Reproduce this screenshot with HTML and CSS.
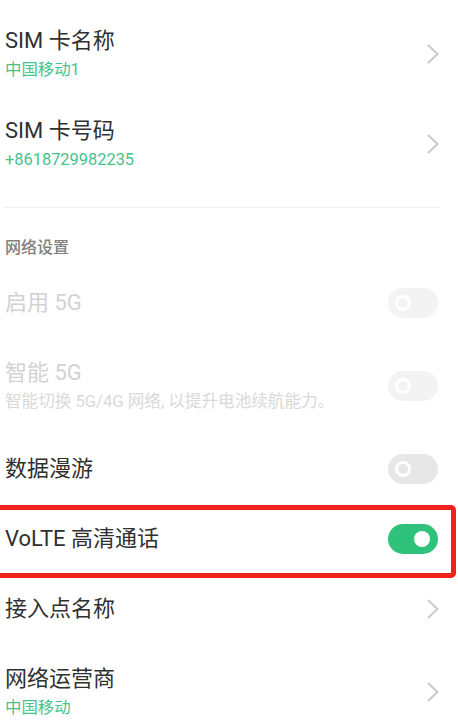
FILE: index.html
```html
<!DOCTYPE html>
<html lang="zh-CN">
<head>
<meta charset="utf-8">
<title>SIM 卡设置</title>
<link rel="stylesheet" href="styles.css">
</head>
<body>
<div class="page">
  <div class="row row-top">
    <div class="text">
      <div class="title">SIM 卡名称</div>
      <div class="sub">中国移动1</div>
    </div>
    <svg class="chev" viewBox="0 0 12 20" width="12" height="20"><polyline points="1.5,1.5 10.5,10 1.5,18.5"/></svg>
  </div>
  <div class="row row-top">
    <div class="text">
      <div class="title">SIM 卡号码</div>
      <div class="sub">+8618729982235</div>
    </div>
    <svg class="chev" viewBox="0 0 12 20" width="12" height="20"><polyline points="1.5,1.5 10.5,10 1.5,18.5"/></svg>
  </div>
  <div class="divider"></div>
  <div class="header">网络设置</div>
  <div class="row single disabled">
    <div class="text"><div class="title">启用 5G</div></div>
    <div class="toggle off faint"><span class="knob"></span></div>
  </div>
  <div class="row double disabled">
    <div class="text">
      <div class="title">智能 5G</div>
      <div class="desc">智能切换 5G/4G 网络, 以提升电池续航能力。</div>
    </div>
    <div class="toggle off faint"><span class="knob"></span></div>
  </div>
  <div class="row single">
    <div class="text"><div class="title">数据漫游</div></div>
    <div class="toggle off"><span class="knob"></span></div>
  </div>
  <div class="row single highlighted">
    <div class="text"><div class="title">VoLTE 高清通话</div></div>
    <div class="toggle on"><span class="knob"></span></div>
    <div class="mark"></div>
  </div>
  <div class="row single">
    <div class="text"><div class="title">接入点名称</div></div>
    <svg class="chev" viewBox="0 0 12 20" width="12" height="20"><polyline points="1.5,1.5 10.5,10 1.5,18.5"/></svg>
  </div>
  <div class="row double">
    <div class="text">
      <div class="title">网络运营商</div>
      <div class="sub">中国移动</div>
    </div>
    <svg class="chev" viewBox="0 0 12 20" width="12" height="20"><polyline points="1.5,1.5 10.5,10 1.5,18.5"/></svg>
  </div>
</div>
</body>
</html>
```
FILE: styles.css
```css
html, body {
  margin: 0;
  padding: 0;
  background: #ffffff;
  overflow: hidden;
  height: 726px;
}
body {
  font-family: "Roboto", "Noto Sans CJK SC", sans-serif;
  color: #303030;
}
.page {
  padding-top: 9px;
  padding-left: 5px;
}
.row {
  position: relative;
  display: flex;
  align-items: center;
  justify-content: space-between;
  box-sizing: border-box;
  padding-right: 20px;
}
.row-top { height: 90px; }
.single { height: 70px; }
.double { height: 96px; }
.text {
  display: flex;
  flex-direction: column;
}
.title {
  font-size: 22px;
  line-height: 30px;
  color: #303030;
}
.sub {
  font-size: 16.4px;
  line-height: 24px;
  margin-top: 2px;
  color: #43c48c;
}
.desc {
  font-size: 16.6px;
  line-height: 24px;
  margin-top: 2px;
  color: #d9d9d9;
}
.disabled .title { color: #d2d2d2; }
.chev {
  fill: none;
  stroke: #cacaca;
  stroke-width: 2;
  stroke-linecap: round;
  stroke-linejoin: round;
  margin-right: -1px;
}
.divider {
  height: 1px;
  background: #eeeeee;
  margin: 18px 18px 0 0;
}
.header {
  box-sizing: border-box;
  height: 60px;
  padding-top: 30px;
  font-size: 16px;
  line-height: 20px;
  font-weight: 500;
  color: #808080;
}
.toggle {
  position: relative;
  width: 50px;
  height: 30px;
  border-radius: 15px;
  flex: none;
}
.toggle .knob {
  position: absolute;
  top: 7px;
  width: 16px;
  height: 16px;
  box-sizing: border-box;
  border-radius: 50%;
}
.toggle.off { background: #e7e7e7; }
.toggle.off.faint { background: #f3f3f3; }
.toggle.off .knob {
  left: 7px;
  border: 3px solid #ffffff;
}
.toggle.on { background: #2fc27a; }
.toggle.on .knob {
  right: 8px;
  background: #ffffff;
}
.mark {
  position: absolute;
  top: 1px;
  bottom: -4px;
  left: -20px;
  right: 2px;
  border: 5px solid #f0221d;
  border-radius: 5px;
  pointer-events: none;
}
```
